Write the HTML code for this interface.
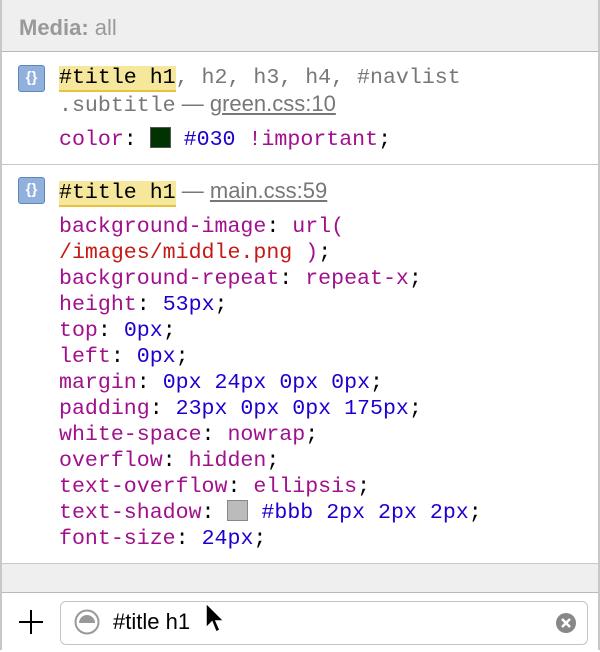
<!DOCTYPE html><html><head><style>
body{margin:0;width:600px;height:652px;background:#fff;position:relative;overflow:hidden;font-family:"Liberation Mono",monospace;}
.frame{position:absolute;left:0;top:0;width:596px;height:650px;border:2px solid #c8c8c8;border-top:0;border-bottom:0;}
.hdr{position:absolute;left:2px;top:0;width:596px;height:51px;background:#efefef;border-bottom:1px solid #b8b8b8;font:22px "Liberation Sans",sans-serif;color:#999;}
.hdr span{position:absolute;left:17px;top:15px}
.ic{position:absolute;left:18px;width:27px;height:27px;background:#8fb1dc;border:1.5px solid #5f86bb;border-radius:3px;box-sizing:border-box;color:#fff;font:bold 15px "Liberation Sans",sans-serif;text-align:center;line-height:23px}
.l{position:absolute;left:59px;font-size:21.6px;line-height:26px;white-space:pre;color:#777}
.hl{background:#f5e79c;color:#000;border-bottom:2px solid #e8c13d}
.p{color:#a0108c}.v{color:#1c00cf}.r{color:#c41a16}.k{color:#000}
.src{font-family:"Liberation Sans",sans-serif;font-size:22px;color:#777}
.src u{text-decoration-color:#777}
.sw{display:inline-block;width:21px;height:21px;vertical-align:-3px;border:1px solid #555;box-sizing:border-box}
.sep{position:absolute;left:2px;width:596px;height:1px;background:#c8c8c8}
</style></head><body>
<div class="frame"></div>
<div class="hdr"><span><b>Media:</b> all</span></div>
<div class="ic" style="top:65px">{}</div>
<div class="l" style="top:65px"><span class="hl">#title h1</span>, h2, h3, h4, #navlist</div>
<div class="l" style="top:91px">.subtitle<span class="src"> — <u>green.css:10</u></span></div>
<div class="l" style="top:127px"><span class="p">color</span><span class="k">: </span><span class="sw" style="background:#030"></span><span class="v"> #030 </span><span class="p">!important</span><span class="k">;</span></div>
<div class="sep" style="top:164px"></div>
<div class="ic" style="top:177px">{}</div>
<div class="l" style="top:178px"><span class="hl">#title h1</span><span class="src"> — <u>main.css:59</u></span></div>
<div class="l" style="top:214px"><span class="p">background-image</span><span class="k">: </span><span class="p">url(</span>
<span class="r">/images/middle.png</span><span class="p"> )</span><span class="k">;</span>
<span class="p">background-repeat</span><span class="k">: </span><span class="p">repeat-x</span><span class="k">;</span>
<span class="p">height</span><span class="k">: </span><span class="v">53px</span><span class="k">;</span>
<span class="p">top</span><span class="k">: </span><span class="v">0px</span><span class="k">;</span>
<span class="p">left</span><span class="k">: </span><span class="v">0px</span><span class="k">;</span>
<span class="p">margin</span><span class="k">: </span><span class="v">0px 24px 0px 0px</span><span class="k">;</span>
<span class="p">padding</span><span class="k">: </span><span class="v">23px 0px 0px 175px</span><span class="k">;</span>
<span class="p">white-space</span><span class="k">: </span><span class="p">nowrap</span><span class="k">;</span>
<span class="p">overflow</span><span class="k">: </span><span class="p">hidden</span><span class="k">;</span>
<span class="p">text-overflow</span><span class="k">: </span><span class="p">ellipsis</span><span class="k">;</span>
<span class="p">text-shadow</span><span class="k">: </span><span class="sw" style="background:#bbb;border-color:#888"></span><span class="v"> #bbb 2px 2px 2px</span><span class="k">;</span>
<span class="p">font-size</span><span class="k">: </span><span class="v">24px</span><span class="k">;</span></div>
<div class="sep" style="top:563px"></div>
<div style="position:absolute;left:2px;top:564px;width:596px;height:28px;background:#efefef"></div>
<div class="sep" style="top:592px;background:#b8b8b8"></div>
<svg style="position:absolute;left:18px;top:609px" width="26" height="26"><path d="M13 1V25M1 13H25" stroke="#000" stroke-width="2"/></svg>
<div style="position:absolute;left:60px;top:601px;width:526px;height:42px;border:1.5px solid #c4c4c4;border-radius:6px;"></div>
<svg style="position:absolute;left:73px;top:608px" width="28" height="28"><circle cx="14" cy="14" r="11.5" fill="#fff" stroke="#999" stroke-width="2"/><path d="M6 15A8 8 0 0 1 22 15Z" fill="#999"/></svg>
<div style="position:absolute;left:113px;top:609px;font:22px 'Liberation Sans',sans-serif;color:#000">#title h1</div>
<svg style="position:absolute;left:555px;top:612px" width="22" height="22"><circle cx="11" cy="11" r="10" fill="#888"/><path d="M7 7L15 15M15 7L7 15" stroke="#fff" stroke-width="2.5"/></svg>
<svg style="position:absolute;left:203px;top:601px" width="24" height="36"><path d="M3 2V27L9 21L13 31L17 29L13 20H21Z" fill="#000" stroke="#fff" stroke-width="1.5"/></svg>
</body></html>
